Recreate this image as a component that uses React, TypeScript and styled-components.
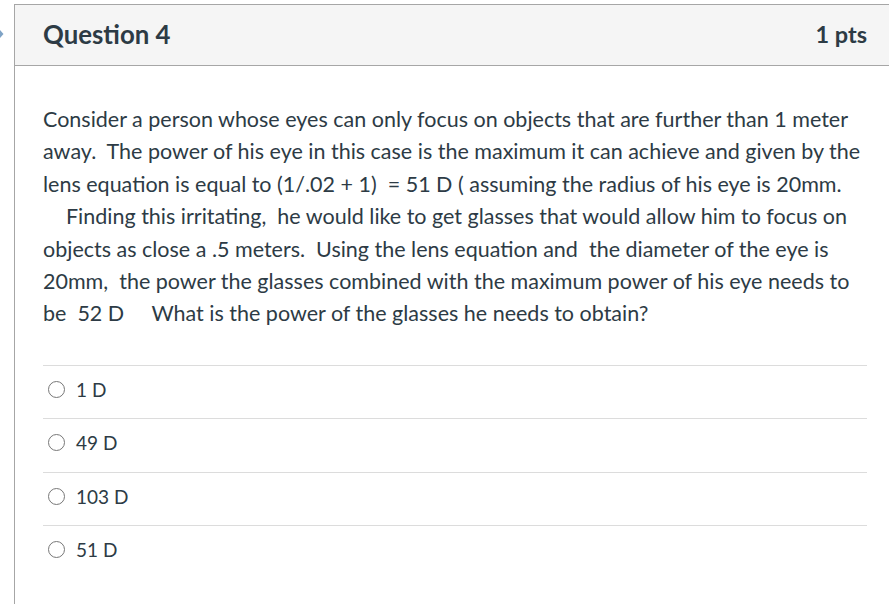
import styled, { createGlobalStyle } from 'styled-components'

const INK = '#2d3b45'

const Global = createGlobalStyle`
  html, body { margin: 0; padding: 0; background: #fff; }
  body { font-family: Lato, "Open Sans", sans-serif; color: ${INK}; }
`

const ANSWERS = ['1 D', '49 D', '103 D', '51 D']

const Page = styled.div`
  display: flex;
  align-items: flex-start;
  padding-top: 4px;
  width: 889px;
  height: 600px;
  overflow: hidden;
`

const Gutter = styled.div`
  width: 14px;
  flex: none;
  display: flex;
  padding-top: 25px;
`

const Card = styled.div`
  flex: 1;
  min-height: 620px;
  border: 1px solid #a6a6a6;
  border-right: none;
  border-bottom: none;
`

const Header = styled.div`
  height: 61px;
  box-sizing: border-box;
  display: flex;
  align-items: center;
  justify-content: space-between;
  padding: 0 22px 0 28px;
  background: #f5f5f5;
  border-bottom: 1px solid #a6a6a6;
`

const Title = styled.div`
  font-size: 25.8px;
  font-weight: 700;
  color: ${INK};
  padding-bottom: 2px;
`

const Points = styled.div`
  font-size: 23.5px;
  font-weight: 700;
  color: ${INK};
  padding-bottom: 2px;
`

const Body = styled.div`
  padding: 37px 22px 0 28px;
`

const Text = styled.div`
  font-size: 21.5px;
  line-height: 32.4px;
  white-space: pre-wrap;
  color: ${INK};
`

const Indent = styled.span`
  display: inline-block;
  width: 23px;
`

const AnswerList = styled.div`
  margin: 35px 0 0 0;
`

const AnswerRow = styled.label`
  display: flex;
  align-items: center;
  gap: 11px;
  height: 53.5px;
  box-sizing: border-box;
  padding: 0 0 6px 5px;
  border-top: 1px solid #dcdcdc;
  font-size: 19px;
  color: ${INK};
`

const Radio = styled.span`
  width: 15px;
  height: 15px;
  border-radius: 50%;
  border: 1px solid #777;
  background: #fff;
  flex: none;
`

export default function App() {
  return (
    <>
      <Global />
      <Page>
        <Gutter>
          <svg width="4" height="10" viewBox="0 0 4 10">
            <path d="M0 1 L3.5 5 L0 9 Z" fill="#7fa3c6" />
          </svg>
        </Gutter>
        <Card>
          <Header>
            <Title>Question 4</Title>
            <Points>1 pts</Points>
          </Header>
          <Body>
            <Text>
              {'Consider a person whose eyes can only focus on objects that are further than 1 meter away.  The power of his eye in this case is the maximum it can achieve and given by the lens equation is equal to (1/.02 + 1)  = 51 D ( assuming the radius of his eye is 20mm.'}
              <br />
              <Indent />
              {'Finding this irritating,  he would like to get glasses that would allow him to focus on objects as close a .5 meters.  Using the lens equation and  the diameter of the eye is 20mm,  the power the glasses combined with the maximum power of his eye needs to be  52 D     What is the power of the glasses he needs to obtain?'}
            </Text>
            <AnswerList>
              {ANSWERS.map((a) => (
                <AnswerRow key={a}>
                  <Radio />
                  {a}
                </AnswerRow>
              ))}
            </AnswerList>
          </Body>
        </Card>
      </Page>
    </>
  )
}
